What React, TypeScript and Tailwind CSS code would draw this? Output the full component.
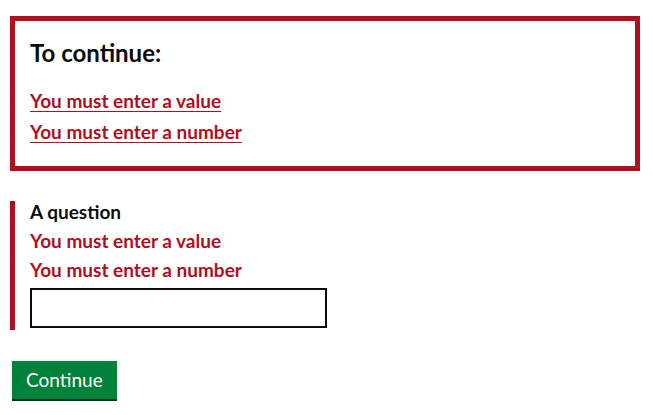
export default function App() {
  return (
    <div className="min-h-screen bg-white px-[10px] pt-[16px] text-[#0b0c0c]" style={{ fontFamily: 'Lato, Arial, sans-serif' }}>
      {/* Error summary */}
      <div className="w-[630px] border-[5px] border-[#b10e1e] px-[15px] pt-[17px] pb-[18px]">
        <h2 className="text-[24px] font-bold leading-[30px] mb-[18px]">To continue:</h2>
        <ul className="flex flex-col">
          <li className="leading-[30px]">
            <a href="#" className="text-[19px] font-bold text-[#b10e1e] underline underline-offset-[3px]">You must enter a value</a>
          </li>
          <li className="leading-[30px]">
            <a href="#" className="text-[19px] font-bold text-[#b10e1e] underline underline-offset-[3px]">You must enter a number</a>
          </li>
        </ul>
      </div>

      {/* Question with errors */}
      <div className="mt-[30px] border-l-[5px] border-[#b10e1e] pl-[15px] pb-[2px] flex flex-col">
        <label className="text-[19px] font-bold leading-[22px] mb-[3px]">A question</label>
        <span className="text-[19px] font-bold leading-[29px] text-[#b10e1e]">You must enter a value</span>
        <span className="text-[19px] font-bold leading-[29px] text-[#b10e1e]">You must enter a number</span>
        <input type="text" className="mt-[4px] w-[297px] h-[40px] border-2 border-[#0b0c0c] outline-none" />
      </div>

      {/* Button */}
      <button className="mt-[31px] ml-[2px] bg-[#00823b] text-white text-[19px] leading-[38px] px-[14px] shadow-[0_2px_0_#003618]">
        Continue
      </button>
    </div>
  );
}
